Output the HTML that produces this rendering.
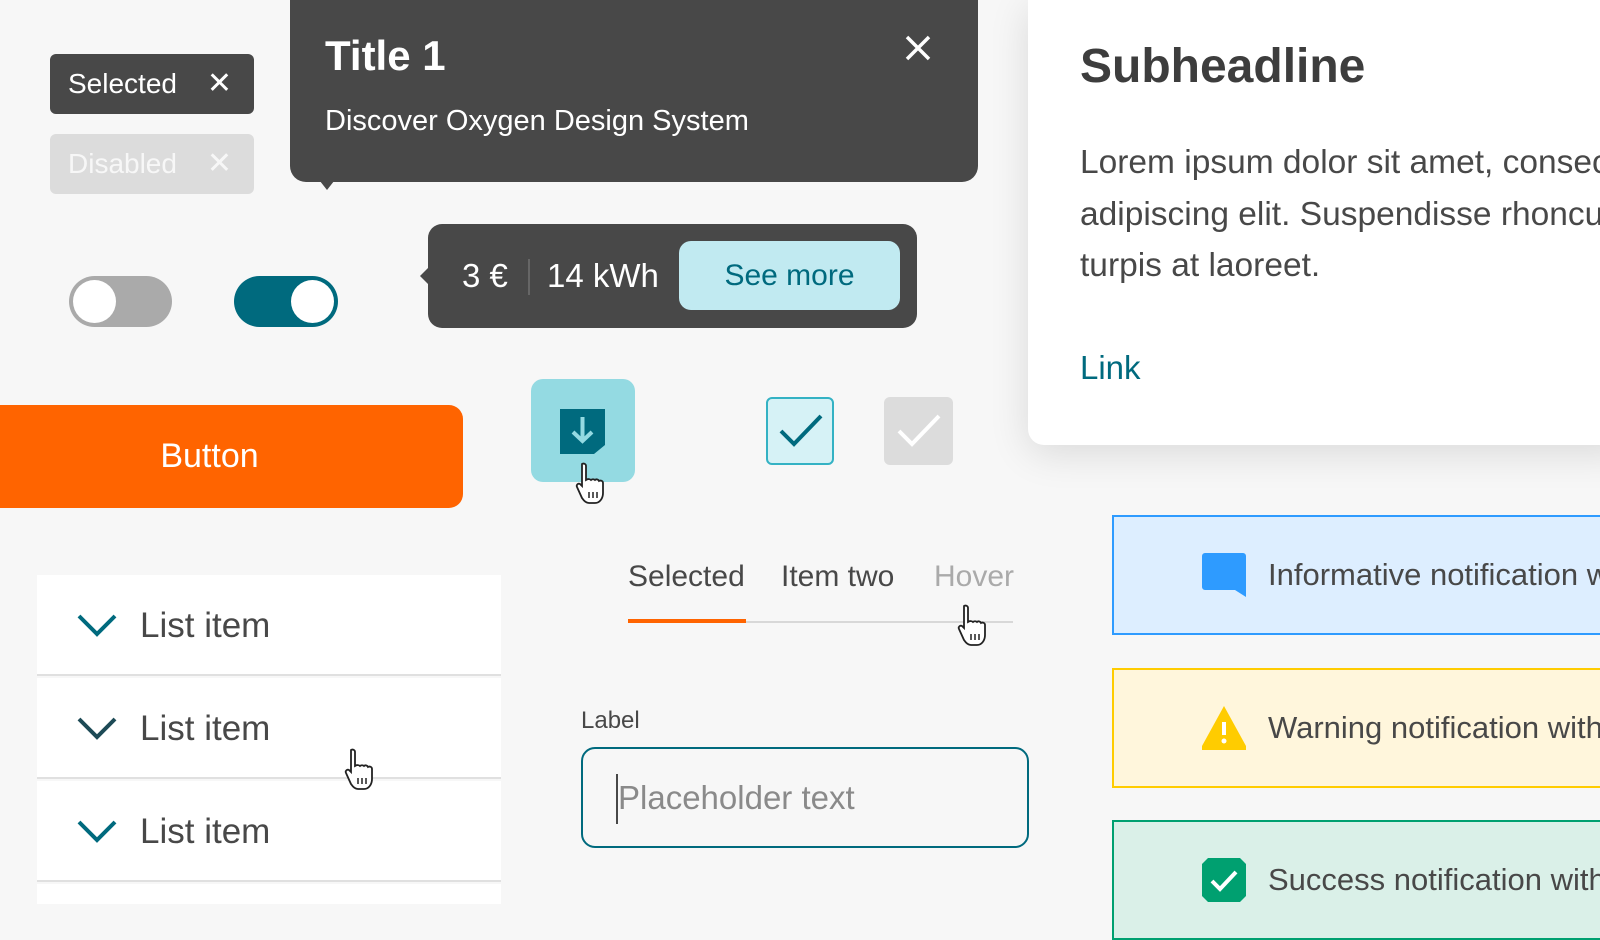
<!DOCTYPE html>
<html><head><meta charset="utf-8"><style>
*{margin:0;padding:0;box-sizing:border-box}
body{width:1600px;height:900px;overflow:hidden;background:#f7f7f7;font-family:"Liberation Sans",sans-serif;color:#484848;position:relative}
.a{position:absolute}
.chip{left:50px;width:204px;height:60px;border-radius:6px;font-size:28px;line-height:60px;padding-left:18px}
.x{position:absolute;right:22px;top:0;font-size:30px}
.li{left:37px;width:464px;height:101px;background:#fff;border-bottom:2px solid #e0e0e0}
.li span{position:absolute;left:103px;top:31px;font-size:35px;color:#484848}
.li svg{position:absolute;left:40px;top:38px}
.notif{left:1112px;width:520px;height:120px;border:2px solid}
.notif span{position:absolute;left:154px;top:40px;font-size:31px;white-space:nowrap;color:#484848}
.notif svg{position:absolute;left:88px;top:36px}
</style></head><body>

<div class="a chip" style="top:54px;background:#484848;color:#fff">Selected<span class="x">✕</span></div>
<div class="a chip" style="top:134px;background:#dcdcdc;color:#f7f7f7">Disabled<span class="x">✕</span></div>

<div class="a" style="left:290px;top:0;width:688px;height:182px;background:#484848;border-radius:0 0 16px 16px"></div>
<div class="a" style="left:316px;top:176px;width:0;height:0;border-left:11px solid transparent;border-right:11px solid transparent;border-top:14px solid #484848"></div>
<div class="a" style="left:325px;top:32px;font-size:42px;font-weight:bold;color:#fff">Title 1</div>
<div class="a" style="left:325px;top:105px;font-size:29px;color:#fff">Discover Oxygen Design System</div>
<svg class="a" style="left:904px;top:34px" width="28" height="28"><path d="M3 3L25 25M25 3L3 25" stroke="#fff" stroke-width="3.5"/></svg>

<div class="a" style="left:69px;top:276px;width:103px;height:51px;border-radius:26px;background:#aaa"></div>
<div class="a" style="left:73px;top:280px;width:43px;height:43px;border-radius:50%;background:#fff"></div>
<div class="a" style="left:234px;top:276px;width:104px;height:51px;border-radius:26px;background:#006a7e"></div>
<div class="a" style="left:291px;top:280px;width:43px;height:43px;border-radius:50%;background:#fff"></div>

<div class="a" style="left:428px;top:224px;width:489px;height:104px;background:#484848;border-radius:14px"></div>
<div class="a" style="left:420px;top:266px;width:0;height:0;border-top:10px solid transparent;border-bottom:10px solid transparent;border-right:10px solid #484848"></div>
<div class="a" style="left:462px;top:257px;font-size:33px;color:#fff">3 €</div>
<div class="a" style="left:528px;top:259px;width:2px;height:36px;background:#666"></div>
<div class="a" style="left:547px;top:257px;font-size:33px;color:#fff">14 kWh</div>
<div class="a" style="left:679px;top:241px;width:221px;height:69px;background:#c1eaf1;border-radius:12px;color:#006a7e;font-size:30px;line-height:69px;text-align:center">See more</div>

<div class="a" style="left:0;top:405px;width:463px;height:103px;background:#ff6400;border-radius:0 14px 14px 0;color:#fff;font-size:34px;line-height:103px;text-align:center;padding-right:44px">Button</div>

<div class="a" style="left:531px;top:379px;width:104px;height:103px;background:#94dae2;border-radius:12px"></div>
<svg class="a" style="left:560px;top:409px" width="46" height="46"><path d="M0 0H45V36L34 45H0Z" fill="#006a7e"/><path d="M22.5 8V32M13 23L22.5 32L32 23" stroke="#94dae2" stroke-width="4" fill="none"/></svg>
<svg class="a" style="left:574px;top:462px" width="34" height="44"><path d="M8 2c2-1 4 0 4 2v14l2-1c2 0 3 1 3 1 1-1 3-1 4 0 1-1 3-1 4 1 2-1 4 0 4 2v10c0 5-3 10-8 10h-6c-3 0-5-2-7-5L3 25c-1-2 1-4 3-3l2 2V4z" fill="#fff" stroke="#222" stroke-width="1.8"/><path d="M15 30v6M19 30v6M23 30v6" stroke="#222" stroke-width="1.5"/></svg>

<div class="a" style="left:766px;top:397px;width:68px;height:68px;border:2px solid #34b2c4;background:#d6f2f6;border-radius:6px"></div>
<svg class="a" style="left:778px;top:412px" width="46" height="38"><path d="M3 19L16 32L43 4" stroke="#006a7e" stroke-width="4" fill="none"/></svg>
<div class="a" style="left:884px;top:397px;width:69px;height:68px;background:#dcdcdc;border-radius:6px"></div>
<svg class="a" style="left:896px;top:412px" width="46" height="38"><path d="M3 19L16 32L43 4" stroke="#fff" stroke-width="4" fill="none"/></svg>

<div class="a" style="left:1028px;top:0;width:600px;height:445px;background:#fff;border-radius:0 0 0 16px;box-shadow:0 8px 40px rgba(0,0,0,.12)"></div>
<div class="a" style="left:1080px;top:39px;font-size:48px;font-weight:bold;color:#3d3d3d">Subheadline</div>
<div class="a" style="left:1080px;top:137px;font-size:33.5px;line-height:51.5px;white-space:nowrap;color:#484848">Lorem ipsum dolor sit amet, consectetur<br>adipiscing elit. Suspendisse rhoncus<br>turpis at laoreet.</div>
<div class="a" style="left:1080px;top:349px;font-size:33px;color:#006a7e">Link</div>

<div class="a notif" style="top:515px;background:#ddeeff;border-color:#2e9bff"><svg width="44" height="44"><path d="M3 0H41a3 3 0 0 1 3 3V44L33 37H3a3 3 0 0 1-3-3V3a3 3 0 0 1 3-3Z" fill="#2e9bff"/></svg><span>Informative notification with</span></div>
<div class="a notif" style="top:668px;background:#fff6dc;border-color:#ffcc00"><svg width="44" height="44"><path d="M22 0L44 40V44H0V40Z" fill="#ffcc00"/><rect x="20" y="16" width="4" height="13" fill="#fff"/><circle cx="22" cy="35" r="2.5" fill="#fff"/></svg><span>Warning notification with</span></div>
<div class="a notif" style="top:820px;background:#daf0e8;border-color:#00a070"><svg width="44" height="44"><path d="M6 0H38L44 6V38L38 44H6L0 38V6Z" fill="#00a070"/><path d="M10 23L18 31L34 14" stroke="#fff" stroke-width="4" fill="none"/></svg><span>Success notification with</span></div>

<div class="a" style="left:628px;top:560px;font-size:30px;color:#484848">Selected</div>
<div class="a" style="left:781px;top:560px;font-size:30px;color:#484848">Item two</div>
<div class="a" style="left:934px;top:560px;font-size:30px;color:#aaa">Hover</div>
<div class="a" style="left:628px;top:621px;width:385px;height:2px;background:#d8d8d8"></div>
<div class="a" style="left:628px;top:619px;width:118px;height:4px;background:#ff6400"></div>
<svg class="a" style="left:956px;top:604px" width="34" height="44"><path d="M8 2c2-1 4 0 4 2v14l2-1c2 0 3 1 3 1 1-1 3-1 4 0 1-1 3-1 4 1 2-1 4 0 4 2v10c0 5-3 10-8 10h-6c-3 0-5-2-7-5L3 25c-1-2 1-4 3-3l2 2V4z" fill="#fff" stroke="#222" stroke-width="1.8"/><path d="M15 30v6M19 30v6M23 30v6" stroke="#222" stroke-width="1.5"/></svg>

<div class="a" style="left:581px;top:707px;font-size:24px;color:#484848">Label</div>
<div class="a" style="left:581px;top:747px;width:448px;height:101px;border:2px solid #006a7e;border-radius:14px"></div>
<div class="a" style="left:616px;top:774px;width:2px;height:50px;background:#484848"></div>
<div class="a" style="left:618px;top:779px;font-size:33px;color:#8a8a8a">Placeholder text</div>

<div class="a li" style="top:575px"><svg width="40" height="24"><path d="M2 3L20 21L38 3" stroke="#006a7e" stroke-width="4" fill="none"/></svg><span>List item</span></div>
<div class="a li" style="top:678px"><svg width="40" height="24"><path d="M2 3L20 21L38 3" stroke="#1d4a56" stroke-width="4" fill="none"/></svg><span>List item</span></div>
<div class="a li" style="top:781px"><svg width="40" height="24"><path d="M2 3L20 21L38 3" stroke="#006a7e" stroke-width="4" fill="none"/></svg><span>List item</span></div>
<div class="a" style="left:37px;top:884px;width:464px;height:20px;background:#fff"></div>
<svg class="a" style="left:343px;top:748px" width="34" height="44"><path d="M8 2c2-1 4 0 4 2v14l2-1c2 0 3 1 3 1 1-1 3-1 4 0 1-1 3-1 4 1 2-1 4 0 4 2v10c0 5-3 10-8 10h-6c-3 0-5-2-7-5L3 25c-1-2 1-4 3-3l2 2V4z" fill="#fff" stroke="#222" stroke-width="1.8"/><path d="M15 30v6M19 30v6M23 30v6" stroke="#222" stroke-width="1.5"/></svg>

</body></html>
